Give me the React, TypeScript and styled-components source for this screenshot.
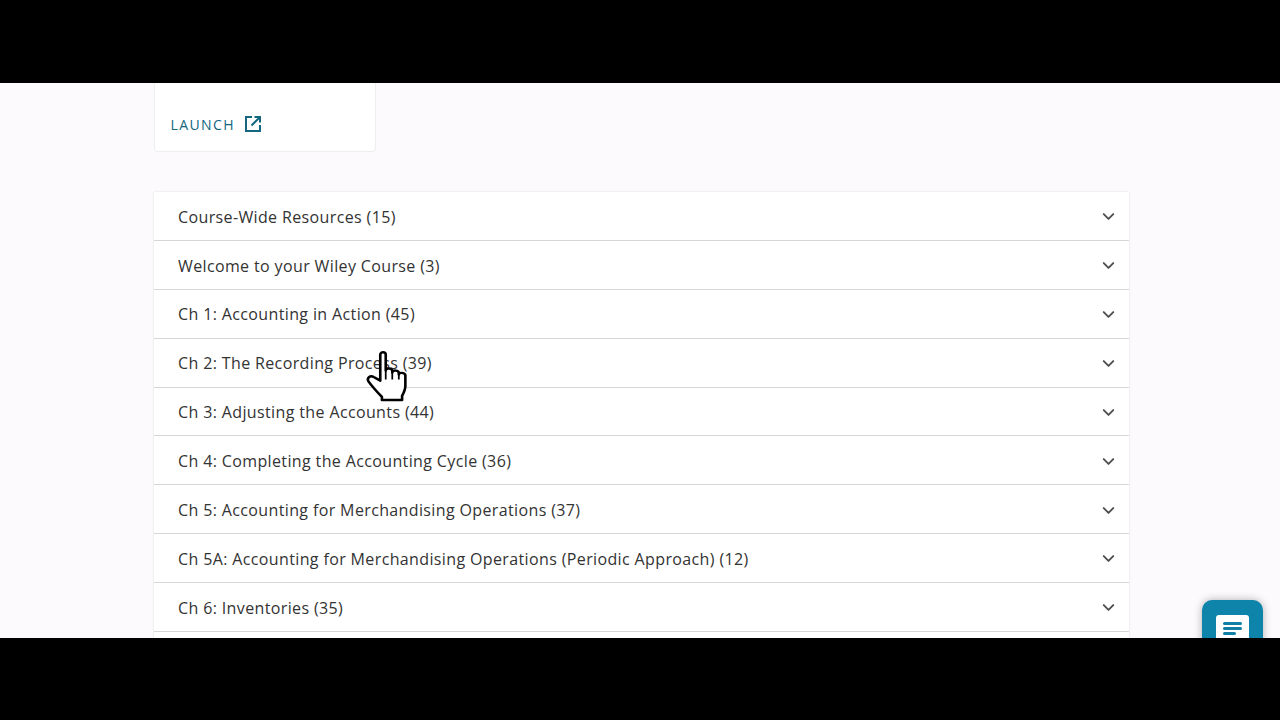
import React from 'react';
import styled, { createGlobalStyle } from 'styled-components';
import { ChevronDown } from 'lucide-react';

const GlobalStyle = createGlobalStyle`
  html, body {
    margin: 0;
    padding: 0;
    background: #000;
    overflow: hidden;
  }
`;

const Screen = styled.div`
  width: 1280px;
  height: 720px;
  background: #000;
  padding: 83px 0 82px;
  box-sizing: border-box;
`;

const Viewport = styled.div`
  position: relative;
  height: 555px;
  overflow: hidden;
  background: #fcfafc;
  font-family: 'Open Sans', sans-serif;
  color: #333;
`;

const Content = styled.div`
  width: 975px;
  margin-left: 154px;
`;

const LaunchCard = styled.div`
  width: 222px;
  height: 69px;
  box-sizing: border-box;
  background: #fff;
  border: 1px solid #eeeef1;
  border-top: none;
  border-radius: 0 0 4px 4px;
  padding: 31px 0 0 15.500px;
  margin-bottom: 40px;
`;

const LaunchLink = styled.a`
  display: flex;
  align-items: center;
  gap: 9px;
  height: 20px;
  color: #14677f;
  font-size: 14px;
  letter-spacing: 1.400px;
`;

const Accordion = styled.div`
  background: #fff;
  box-shadow: 0 0 2px rgba(0, 0, 0, 0.12);
  padding-bottom: 20px;
`;

const Row = styled.div`
  display: flex;
  align-items: center;
  justify-content: space-between;
  height: 48.900px;
  box-sizing: border-box;
  padding: 1.500px 11px 0 24px;
  border-bottom: 1px solid #d6d6d6;
  font-size: 16px;
  letter-spacing: 0.370px;
`;

const RowChevron = styled(ChevronDown)`
  color: #4f4f4f;
`;

const ChatButton = styled.div`
  position: absolute;
  left: 1202px;
  top: 517px;
  width: 61px;
  height: 61px;
  border-radius: 10px;
  background: #0f84ab;
  box-shadow: 0 0 8px rgba(0, 0, 0, 0.3);
  display: flex;
  justify-content: center;
  padding-top: 15px;
  box-sizing: border-box;
`;

const ChatBubble = styled.div`
  width: 33px;
  height: 30px;
  border-radius: 3px;
  background: #fff;
  display: flex;
  flex-direction: column;
  gap: 2px;
  padding: 7px 0 0 7px;
  box-sizing: border-box;
`;

const ChatLine = styled.div<{ $width: number }>`
  width: ${(p) => p.$width}px;
  height: 3px;
  border-radius: 2px;
  background: #0f7fa5;
`;

const Cursor = styled.svg`
  position: absolute;
  left: 365px;
  top: 265px;
`;

const rows = [
  'Course-Wide Resources (15)',
  'Welcome to your Wiley Course (3)',
  'Ch 1: Accounting in Action (45)',
  'Ch 2: The Recording Process (39)',
  'Ch 3: Adjusting the Accounts (44)',
  'Ch 4: Completing the Accounting Cycle (36)',
  'Ch 5: Accounting for Merchandising Operations (37)',
  'Ch 5A: Accounting for Merchandising Operations (Periodic Approach) (12)',
  'Ch 6: Inventories (35)',
];

const LaunchIcon = () => (
  <svg width="18" height="18" viewBox="0 0 18 18" fill="none" stroke="#14677f" strokeWidth="2">
    <path d="M8 2H2v14h14v-6" />
    <path d="M7.500 10.500 15.500 2.500M10.500 2h5.500v5.500" />
  </svg>
);

const App: React.FC = () => {
  return (
    <Screen>
      <GlobalStyle />
      <Viewport>
        <Content>
          <LaunchCard>
            <LaunchLink>
              LAUNCH
              <LaunchIcon />
            </LaunchLink>
          </LaunchCard>
          <Accordion>
            {rows.map((r) => (
              <Row key={r}>
                {r}
                <RowChevron size={19} strokeWidth={2.400} />
              </Row>
            ))}
          </Accordion>
        </Content>
        <ChatButton>
          <ChatBubble>
            <ChatLine $width={19} />
            <ChatLine $width={19} />
            <ChatLine $width={13} />
          </ChatBubble>
        </ChatButton>
        {/* hand pointer from the screen recording */}
        <Cursor width="48" height="55" viewBox="0 0 44 54" preserveAspectRatio="none">
          <path
            d="M14 32V6.500C14 3.500 19 3.500 19 6.500V22C19 19.500 25 19.500 25 22.500V24C25 21.500 31 21.500 31 24.500V26C31 23.500 37 24 37 27V37C37 41 35.500 44 34 47V51H15.500V48C11 43 6 37 3 32.500C1.500 29 5 26.500 8 28.500Z"
            fill="#fff"
            stroke="#000"
            strokeWidth="2.400"
            strokeLinejoin="round"
          />
          <path d="M19 22V31M25 23V31M31 25V31" stroke="#000" strokeWidth="1.600" />
        </Cursor>
      </Viewport>
    </Screen>
  );
};

export default App;
